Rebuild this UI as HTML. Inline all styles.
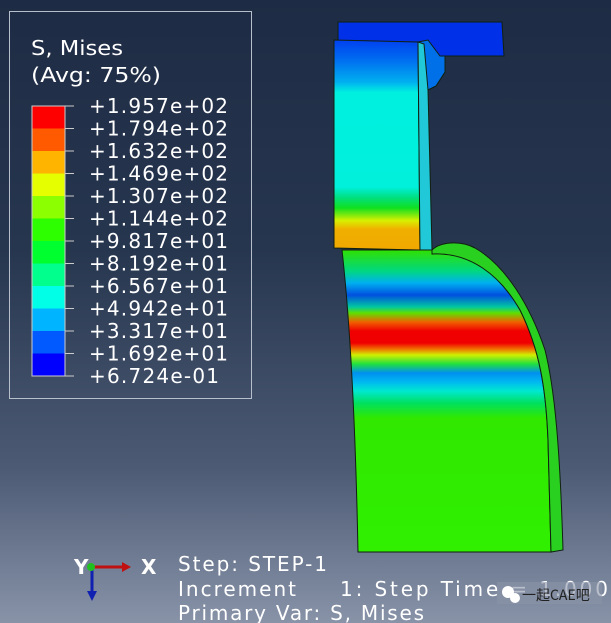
<!DOCTYPE html>
<html><head><style>
html,body{margin:0;padding:0}
body{width:611px;height:623px;overflow:hidden;position:relative;background:linear-gradient(#1e2b44 0%,#27364f 40%,#4c5a74 75%,#8893a8 100%);font-family:"DejaVu Sans","Liberation Sans",sans-serif;color:#fff}
</style></head><body>
<div style="position:absolute;left:9px;top:11px;width:241px;height:386px;border:1px solid #b8bfcc"></div>
<svg style="position:absolute;left:0;top:0" width="611" height="623">
<g fill="#fff" font-size="20" font-family="DejaVu Sans,sans-serif">
<text x="31" y="55" textLength="92" lengthAdjust="spacingAndGlyphs">S, Mises</text>
<text x="31" y="82" textLength="130" lengthAdjust="spacingAndGlyphs">(Avg: 75%)</text>
</g>
<g stroke="none">
<rect x="32" y="106" width="33" height="23" fill="#ff0000"/>
<rect x="32" y="128.5" width="33" height="23" fill="#ff5a00"/>
<rect x="32" y="151" width="33" height="23" fill="#ffb400"/>
<rect x="32" y="173.5" width="33" height="23" fill="#e6ff00"/>
<rect x="32" y="196" width="33" height="23" fill="#8cff00"/>
<rect x="32" y="218.5" width="33" height="23" fill="#2eff00"/>
<rect x="32" y="241" width="33" height="23" fill="#00ff2e"/>
<rect x="32" y="263.5" width="33" height="23" fill="#00ff8c"/>
<rect x="32" y="286" width="33" height="23" fill="#00ffe6"/>
<rect x="32" y="308.5" width="33" height="23" fill="#00b4ff"/>
<rect x="32" y="331" width="33" height="23" fill="#005aff"/>
<rect x="32" y="353.5" width="33" height="22" fill="#0000ff"/>
</g>
<rect x="32" y="106" width="33" height="270" fill="none" stroke="#ccc" stroke-width="1"/>
<g stroke="#ccc" stroke-width="1">
<line x1="65" y1="106" x2="74" y2="106"/><line x1="65" y1="128.5" x2="74" y2="128.5"/><line x1="65" y1="151" x2="74" y2="151"/><line x1="65" y1="173.5" x2="74" y2="173.5"/><line x1="65" y1="196" x2="74" y2="196"/><line x1="65" y1="218.5" x2="74" y2="218.5"/><line x1="65" y1="241" x2="74" y2="241"/><line x1="65" y1="263.5" x2="74" y2="263.5"/><line x1="65" y1="286" x2="74" y2="286"/><line x1="65" y1="308.5" x2="74" y2="308.5"/><line x1="65" y1="331" x2="74" y2="331"/><line x1="65" y1="353.5" x2="74" y2="353.5"/><line x1="65" y1="376" x2="74" y2="376"/>
</g>
<g fill="#fff" font-size="20" font-family="DejaVu Sans,sans-serif" lengthAdjust="spacingAndGlyphs">
<text x="89" y="113" textLength="139">+1.957e+02</text><text x="89" y="135.5" textLength="139">+1.794e+02</text><text x="89" y="158" textLength="139">+1.632e+02</text><text x="89" y="180.5" textLength="139">+1.469e+02</text><text x="89" y="203" textLength="139">+1.307e+02</text><text x="89" y="225.5" textLength="139">+1.144e+02</text><text x="89" y="248" textLength="139">+9.817e+01</text><text x="89" y="270.5" textLength="139">+8.192e+01</text><text x="89" y="293" textLength="139">+6.567e+01</text><text x="89" y="315.5" textLength="139">+4.942e+01</text><text x="89" y="338" textLength="139">+3.317e+01</text><text x="89" y="360.5" textLength="139">+1.692e+01</text><text x="89" y="383" textLength="130">+6.724e-01</text>
</g>
<defs>
<linearGradient id="up" x1="0" y1="40" x2="0" y2="250" gradientUnits="userSpaceOnUse">
<stop offset="0" stop-color="#0040f0"/><stop offset="0.1" stop-color="#0070f0"/><stop offset="0.2" stop-color="#00b0f0"/><stop offset="0.25" stop-color="#00f0e0"/><stop offset="0.7" stop-color="#00f0dc"/><stop offset="0.75" stop-color="#00e080"/><stop offset="0.8" stop-color="#10e020"/><stop offset="0.86" stop-color="#d8f000"/><stop offset="0.9" stop-color="#f0b000"/><stop offset="1" stop-color="#f0a800"/>
</linearGradient>
<linearGradient id="lo" x1="0" y1="250" x2="0" y2="550" gradientUnits="userSpaceOnUse">
<stop offset="0" stop-color="#30e000"/><stop offset="0.07" stop-color="#00d880"/><stop offset="0.11" stop-color="#00b0f0"/><stop offset="0.15" stop-color="#0050e0"/><stop offset="0.19" stop-color="#00c8a0"/><stop offset="0.21" stop-color="#60e000"/><stop offset="0.24" stop-color="#f06000"/><stop offset="0.27" stop-color="#f00000"/><stop offset="0.31" stop-color="#f00000"/><stop offset="0.33" stop-color="#f07000"/><stop offset="0.35" stop-color="#d0f000"/><stop offset="0.38" stop-color="#20e040"/><stop offset="0.41" stop-color="#0090f0"/><stop offset="0.44" stop-color="#00b8f0"/><stop offset="0.47" stop-color="#00e8d0"/><stop offset="0.51" stop-color="#00e060"/><stop offset="0.56" stop-color="#30e800"/><stop offset="1" stop-color="#30f000"/>
</linearGradient>
</defs>
<g stroke="#102010" stroke-width="1">
<polygon points="338,22 502,22 504,56 445,56 445,72 436,86 428,90 424,48 338,42" fill="#0030e8"/>
<polygon points="418,42 428,40 440,56 445,56 445,72 436,86 428,90 422,60" fill="#0070e8"/>
<polygon points="334,40 418,42 420,250 334,248" fill="url(#up)"/>
<polygon points="418,42 424,44 428,90 432,250 420,252" fill="#20c8d8"/>
<path d="M342,250 L432,250 C470,252 500,275 520,310 C540,350 546,390 548,440 L551,552 L358,552 C356,450 352,340 342,250 Z" fill="url(#lo)"/>
<path d="M432,250 C440,242 460,240 475,248 C505,265 530,305 545,350 C555,390 560,450 563,550 L551,552 L548,440 C546,390 540,350 520,310 C500,275 470,252 432,254 Z" fill="#2ad020"/>
</g>
<g>
<line x1="91" y1="567" x2="122" y2="567" stroke="#c01010" stroke-width="3"/><polygon points="122,562 131,567 122,572" fill="#c01010"/>
<line x1="92" y1="567" x2="92" y2="592" stroke="#1020b0" stroke-width="3"/><polygon points="87,591 92,601 97,591" fill="#1020b0"/>
<circle cx="91" cy="567" r="4" fill="#20c020"/>
<text x="74" y="574" fill="#fff" font-size="20" font-weight="bold">Y</text>
<text x="141" y="574" fill="#fff" font-size="20" font-weight="bold">X</text>
</g>
<g fill="#fff" font-size="20" lengthAdjust="spacingAndGlyphs">
<text x="178" y="571" textLength="149">Step: STEP-1</text>
<text x="178" y="596" textLength="118">Increment</text><text x="340" y="596" textLength="268">1: Step Time =    1.000</text>
<text x="178" y="620" textLength="246">Primary Var: S, Mises</text>
</g>
<rect x="497" y="582" width="105" height="22" fill="#8a95a9" opacity="0.6"/>
<circle cx="508" cy="592" r="6" fill="#fff"/><circle cx="515" cy="598" r="5" fill="#fff"/>
<text x="522" y="600" fill="#222" font-size="14" font-family="Noto Sans CJK SC,sans-serif">一起CAE吧</text>
</svg>
</body></html>
